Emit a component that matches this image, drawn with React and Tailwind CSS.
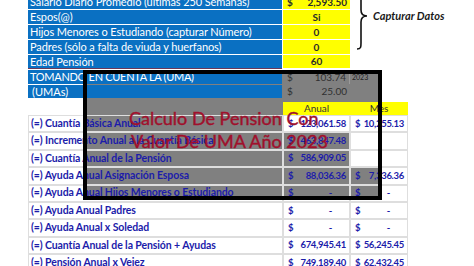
import React from "react";

const topRows = [
  { label: "Salario Diario Promedio (últimas 250 Semanas)", value: "2,593.50", dollar: true, h: "h-[14px]" },
  { label: "Espos(@)", value: "Si", h: "h-[14px]" },
  { label: "Hijos Menores o Estudiando (capturar Número)", value: "0", h: "h-[14px]" },
  { label: "Padres (sólo a falta de viuda y huerfanos)", value: "0", h: "h-[14px]" },
];

const dataRows = [
  { label: "(=) Cuantía Básica  Anual", a: "123,061.58", m: "10,255.13", aw: true, mw: true },
  { label: "(=) Incremento Anual a la Cuantía Básica", a: "463,847.48", m: null, mw: true },
  { label: "(=) Cuantía Anual de la Pensión", a: "586,909.05", m: null, mw: true },
  { label: "(=) Ayuda Anual Asignación Esposa", a: "88,036.36", m: "7,336.36" },
  { label: "(=)  Ayuda Anual Hijos Menores o Estudiando", a: "-", m: "-" },
  { label: "(=) Ayuda Anual Padres", a: "-", m: "-" },
  { label: "(=) Ayuda Anual x Soledad", a: "-", m: "-" },
  { label: "(=) Cuantía Anual de la Pensión + Ayudas", a: "674,945.41", m: "56,245.45" },
  { label: "(=) Pensión Anual x Vejez", a: "749,189.40", m: "62,432.45" },
];

function Money({ v, dash }) {
  return (
    <div className="flex w-full items-center justify-between pl-[4px] pr-[3px]">
      <span>$</span>
      <span className={dash ? "pr-[14px]" : ""}>{v}</span>
    </div>
  );
}

export default function App() {
  return (
    <div
      className="relative w-[474px] h-[266px] overflow-hidden bg-white"
      style={{ fontFamily: "Lato, 'Liberation Sans', sans-serif" }}
    >
      {/* gray shape behind */}
      <div className="absolute left-[87px] top-[73px] w-[291px] h-[124px] bg-[#808080]" />

      <div className="relative z-10 flex flex-col pl-[28px] -mt-[5px]">
        {/* top section */}
        <div className="flex items-start">
          <div className="flex flex-col w-[322px] shrink-0">
            {topRows.map((r, i) => (
              <div key={i} className={`flex ${r.h} mb-px`}>
                <div className="w-[254px] shrink-0 bg-[#0a70c2] text-white text-[11px] leading-[14px] pl-[2px] tracking-[-0.1px] whitespace-nowrap overflow-hidden">
                  {r.label}
                </div>
                <div className="w-[67px] shrink-0 ml-px bg-[#ffff00] text-[#2a2a2a] font-bold text-[10px] leading-[14px] flex items-center justify-center">
                  {r.dollar ? <Money v={r.value} /> : r.value}
                </div>
              </div>
            ))}
            <div className="flex h-[14px]">
              <div className="w-[254px] shrink-0 bg-[#0a70c2] border-b border-[#6a3a5a] text-white text-[11px] leading-[13px] pl-[2px] tracking-[-0.1px]">
                Edad Pensión
              </div>
              <div className="w-[67px] shrink-0 ml-px h-[13px] bg-[#ffff00] text-[#2a2a2a] font-bold text-[10px] leading-[13px] text-center">
                60
              </div>
            </div>
            <div className="h-px" />
            <div className="flex h-[14px] mb-px">
              <div className="w-[254px] shrink-0 bg-[#0a70c2] text-white text-[11px] leading-[14px] pl-[2px] tracking-[-0.3px] whitespace-nowrap">
                TOMANDO EN CUENTA LA (UMA)
              </div>
              <div className="w-[67px] shrink-0 ml-px text-[#303030] text-[10px] leading-[14px] flex items-center border-r border-[#9a9a9a]">
                <Money v="103.74" />
              </div>
              <div className="w-[28px] shrink-0 text-[#202020] text-[7px] leading-[14px] pl-[2px]">2023</div>
            </div>
            <div className="flex h-[13px]">
              <div className="w-[254px] shrink-0 bg-[#0a70c2] text-white text-[11px] leading-[13px] pl-[4px] whitespace-nowrap">
                (UMAs)
              </div>
              <div className="w-[67px] shrink-0 ml-px text-[#303030] text-[10px] leading-[13px] flex items-center">
                <Money v="25.00" />
              </div>
            </div>
          </div>
          {/* brace + label */}
          <div className="flex items-start ml-[6px] -mt-[15px]">
            <svg width="12" height="70" viewBox="0 0 12 70" className="shrink-0">
              <path
                d="M1 1 C5 1 5 4 5 9 L5 30 C5 34 7 36 11 36 C7 36 5 38 5 42 L5 63 C5 67 5 69 1 69"
                fill="none"
                stroke="#111"
                strokeWidth="1.6"
              />
            </svg>
            <span className="ml-[5px] mt-[30px] text-[11px] font-bold italic text-[#1a1a1a] leading-[12px] whitespace-nowrap">
              Capturar Datos
            </span>
          </div>
        </div>

        {/* header Anual / Mes */}
        <div className="flex mt-[4px] h-[13px]">
          <div className="w-[255px] shrink-0" />
          <div className="w-[67px] shrink-0 bg-[#ffff00] text-[#333] text-[10px] leading-[13px] text-center">Anual</div>
          <div className="w-[58px] shrink-0 bg-[#ffff00] text-[#333] text-[10px] leading-[13px] text-center">Mes</div>
        </div>

        {/* data rows */}
        {dataRows.map((r, i) => (
          <div key={i} className="flex h-[17.4px] text-[#1c1caa] font-bold">
            <div className="w-[255px] shrink-0 border border-[#dedede] pl-[2px] flex items-center whitespace-nowrap text-[10.5px] tracking-[-0.1px]">
              {r.label}
            </div>
            <div className={`w-[67px] shrink-0 border border-[#dedede] flex items-center text-[9.5px] tracking-[-0.3px] ${r.aw ? "bg-white" : ""}`}>
              <Money v={r.a} dash={r.a === "-"} />
            </div>
            <div className={`w-[58px] shrink-0 border border-[#dedede] flex items-center text-[9.5px] tracking-[-0.3px] ${r.mw ? "bg-white" : ""}`}>
              {r.m && <Money v={r.m} dash={r.m === "-"} />}
            </div>
          </div>
        ))}
      </div>

      {/* black frame */}
      <div className="absolute z-20 left-[83px] top-[70px] w-[299px] h-[130px] border-4 border-black" />

      {/* red title */}
      <div className="absolute z-20 left-[129px] top-[107px] text-[#a0102c] text-[18px] leading-[23px] whitespace-nowrap [-webkit-text-stroke:0.4px_#a0102c]">
        <div>Calculo De Pension Con</div>
        <div className="pl-[2px]">Valor De UMA Año 2023</div>
      </div>
    </div>
  );
}
